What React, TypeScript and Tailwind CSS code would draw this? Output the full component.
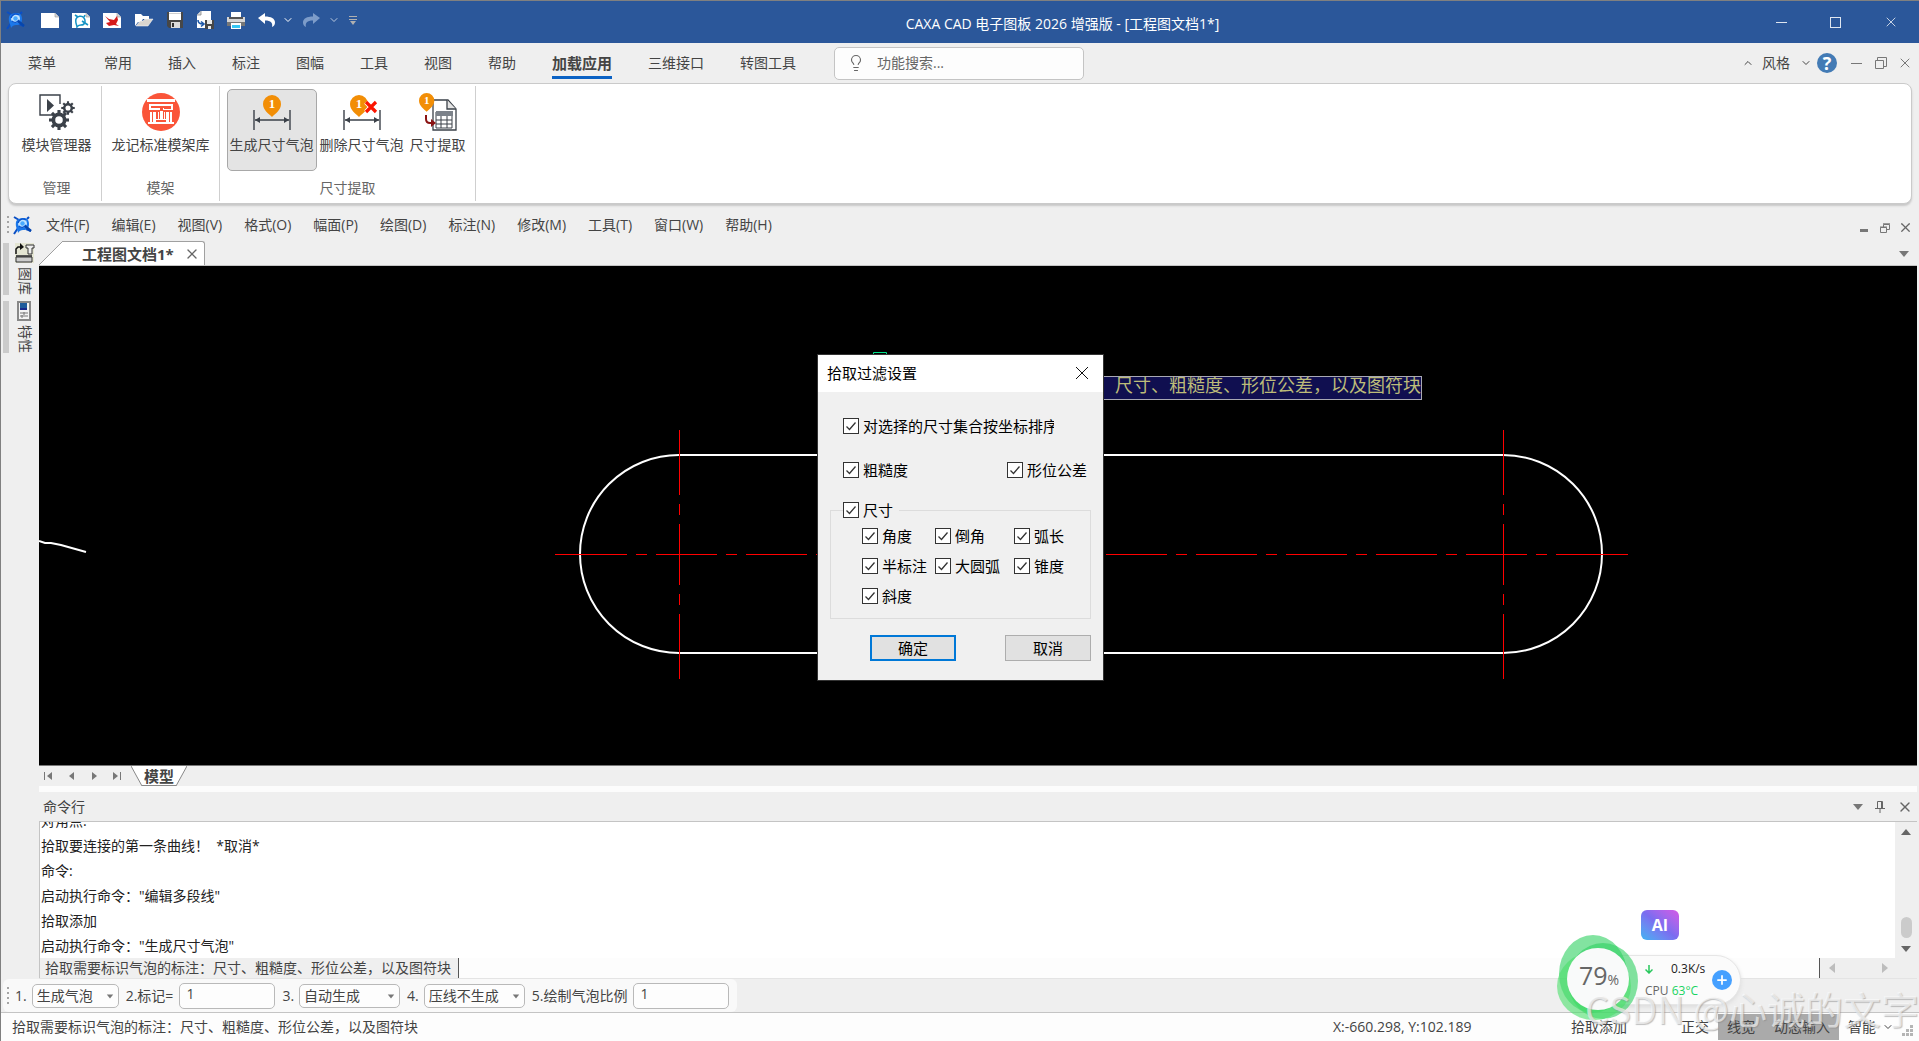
import type { ReactNode } from 'react'
import { ChevronDown, ChevronUp, Lightbulb, Plus, X } from 'lucide-react'

type Option = { key: string; label: string }

type CheckProps = {
  label: string
  clip?: boolean
}

const ribbonTabs = ['常用', '插入', '标注', '图幅', '工具', '视图', '帮助', '加载应用', '三维接口', '转图工具']

const menuItems = [
  '文件(F)',
  '编辑(E)',
  '视图(V)',
  '格式(O)',
  '幅面(P)',
  '绘图(D)',
  '标注(N)',
  '修改(M)',
  '工具(T)',
  '窗口(W)',
  '帮助(H)',
]

const logLines: Option[] = [
  { key: 'l1', label: '对角点:' },
  { key: 'l2', label: '拾取要连接的第一条曲线！  *取消*' },
  { key: 'l3', label: '命令:' },
  { key: 'l4', label: '启动执行命令："编辑多段线"' },
  { key: 'l5', label: '拾取添加' },
  { key: 'l6', label: '启动执行命令："生成尺寸气泡"' },
]

const prompt = '拾取需要标识气泡的标注：尺寸、粗糙度、形位公差，以及图符块'

function LogoMark() {
  return (
    <svg viewBox="0 0 20 20" className="size-5" fill="none">
      <path d="M2 2l5 3M2 19l4-6M15 4l2-2M14 14l5 2" stroke="#0b4fc4" strokeWidth="2" />
      <path d="M4 7c1-3 4-4 8-4 3 0 5 2 5 6s-2 6-6 6c-2 0-4 1-5 3 0-3-3-6-2-11z" fill="#1b78ea" />
      <circle cx="10.500" cy="8.500" r="4.500" fill="#bfe3ff" />
      <path d="M6 8c1-4 5-5 8-3M7 11c2 2 5 2 7-1" stroke="#0a56cf" strokeWidth="1.400" />
      <circle cx="10.500" cy="8.500" r="2.200" fill="#4aaaff" />
      <path d="M13 11l6 5" stroke="#0646ae" strokeWidth="2.400" />
    </svg>
  )
}

function PageIcon({ children }: { children?: ReactNode }) {
  return (
    <svg viewBox="0 0 18 15" className="h-[15px] w-[18px]">
      <path d="M0 0h14l4 4v11H0z" fill="#fff" />
      <path d="M14 0v4h4" fill="#d8d8d8" stroke="#999" strokeWidth=".6" />
      {children}
    </svg>
  )
}

function OpenIcon() {
  return (
    <svg viewBox="0 0 20 14" className="h-[14px] w-5">
      <path d="M1 13V1h6l2 2h6v3H9L7 9H4z" fill="#fff" />
      <path d="M2 13l4-5h3l2-2h8l-5 7z" fill="#d9d5cf" stroke="#fff" strokeWidth=".5" />
    </svg>
  )
}

function SaveIcon() {
  return (
    <svg viewBox="0 0 16 16" className="size-4">
      <path d="M0 0h16v16H2l-2-2z" fill="#474747" />
      <path d="M2 0h12v8H2z" fill="#fff" />
      <path d="M2 1h12v1H2z" fill="#cfcfcf" />
      <path d="M4 10h9v6H4z" fill="#ddd" />
      <path d="M5 11h2v4H5z" fill="#333" />
    </svg>
  )
}

function SaveAsIcon() {
  return (
    <svg viewBox="0 0 18 18" className="size-[18px]">
      <path d="M5 0h10v17H1V4z" fill="#fff" />
      <path d="M5 0v4H1" fill="#d8d8d8" stroke="#888" strokeWidth=".8" />
      <path d="M2 9c0 3 2 4 5 4M5 10.500l3 2.500-3 2.500" stroke="#1d58a8" strokeWidth="1.600" fill="none" />
      <path d="M9 9h9v9H9z" fill="#474747" />
      <path d="M11 9h5v4h-5zM12 15h3v3h-3z" fill="#e8e8e8" />
    </svg>
  )
}

function PrintIcon() {
  return (
    <svg viewBox="0 0 18 17" className="h-[17px] w-[18px]">
      <path d="M4 0h10v6H4z" fill="#fff" />
      <path d="M0 5h3v2h12V5h3v8H0z" fill="#d5d5d5" />
      <path d="M2 5h14v2H2z" fill="#555" />
      <path d="M0 10h18v4H0z" fill="#777" />
      <path d="M4 11h10v6H4z" fill="#fff" />
      <path d="M5 13h8v3H5z" fill="#35c6f4" />
    </svg>
  )
}

function UndoIcon({ flip = false }: { flip?: boolean }) {
  return (
    <svg viewBox="0 0 18 14" className={flip ? 'h-[14px] w-[18px] -scale-x-100 text-[#7d9cc9]' : 'h-[14px] w-[18px] text-white'}>
      <path d="M0 5l7-5v3.500c6 0 10 2 10 6 0 2-1 3.500-3 4.500 1-4-1-6.500-7-6.500V11z" fill="currentColor" />
    </svg>
  )
}

function Gear({ cx, cy, r }: { cx: number; cy: number; r: number }) {
  const tooth = r * 0.42
  return (
    <g transform={`translate(${cx} ${cy})`}>
      {[0, 45, 90, 135, 180, 225, 270, 315].map((a) => (
        <rect key={a} x={-tooth / 2} y={-r * 1.35} width={tooth} height={r * 0.6} fill="#3b4149" transform={`rotate(${a})`} />
      ))}
      <circle r={r * 0.76} fill="none" stroke="#3b4149" strokeWidth={r * 0.5} />
    </g>
  )
}

function ModuleIcon() {
  return (
    <svg viewBox="0 0 36 38" className="h-[38px] w-9">
      <path d="M14 22H1V2h20v9" fill="none" stroke="#3b4149" strokeWidth="1.400" />
      <path d="M8 6l7 6.500L8 19z" fill="#3b4149" />
      <Gear cx={29} cy={15} r={5} />
      <Gear cx={20} cy={27} r={7.4} />
    </svg>
  )
}

function MoldIcon() {
  return (
    <svg viewBox="0 0 38 38" className="size-[38px]">
      <circle cx="19" cy="19" r="19" fill="#fa5539" />
      <path d="M5 6h28v3H5zM7 11h24v2H7zM7 15h24v2H7zM7 11h2v6H7zM29 11h2v6h-2z" fill="#fff" />
      <path d="M18 15h3v2h-3zM22 14h7v2h-7z" fill="#fa5539" />
      <path d="M8 19h6v10H8zM24 19h6v10h-6zM16 19h1v8h-1zM18 18h3v9h-3zM22 19h1v8h-1zM13 26h12v1H13zM6 29h26v2H6z" fill="#fff" />
      <path d="M10 19h1v10h-1zM27 19h1v10h-1z" fill="#fa5539" />
    </svg>
  )
}

function Pin({ x, y }: { x: number; y: number }) {
  return (
    <g transform={`translate(${x} ${y})`}>
      <path d="M0 13C-3 10-9 6-9 0a9 9 0 0 1 18 0c0 6-6 10-9 13z" fill="#f28e06" />
      <text y="4" textAnchor="middle" fontSize="13" fontWeight="700" fill="#fff" className="font-['Liberation_Serif',serif]">
        1
      </text>
    </g>
  )
}

function BubbleIcon({ remove = false }: { remove?: boolean }) {
  return (
    <svg viewBox="0 0 38 38" className="size-[38px] overflow-visible">
      <path d="M1 17v20M37 17v20M2 27h34" stroke="#3b4149" strokeWidth="1.400" />
      <path d="M2 27l5-3v6zM36 27l-5-3v6z" fill="#3b4149" />
      <Pin x={remove ? 16 : 19} y={11} />
      {remove && <path d="M23 9l10 10M33 9L23 19" stroke="#fff" strokeWidth="5" />}
      {remove && <path d="M23 9l10 10M33 9L23 19" stroke="#fb1500" strokeWidth="3.200" />}
    </svg>
  )
}

function ExtractIcon() {
  return (
    <svg viewBox="0 0 38 38" className="size-[38px]">
      <path d="M14 37V7h15l8 9v21z" fill="#fff" stroke="#3b4149" strokeWidth="1.300" />
      <path d="M28 7v9h9" fill="#e4e4e4" stroke="#3b4149" strokeWidth="1.300" />
      <path d="M17 19h16v16H17z" fill="#fff" stroke="#3b4149" />
      <path d="M17 18h17v5H17z" fill="#7c828a" />
      <path d="M17 27h16M17 31h16M22 23v12M28 23v12" stroke="#3b4149" />
      <path d="M7 22v4c0 3 1 4 4 4h3" stroke="#8a1212" strokeWidth="2" fill="none" />
      <path d="M12 26l5 4-5 4z" fill="#8a1212" />
      <g transform="scale(.85)">
        <Pin x={9} y={9} />
      </g>
    </svg>
  )
}

function Triangle({ className, d }: { className?: string; d: string }) {
  return (
    <svg viewBox="0 0 10 10" className={className ?? 'size-[10px] text-[#777]'}>
      <path d={d} fill="currentColor" />
    </svg>
  )
}

function RestoreIcon() {
  return (
    <svg viewBox="0 0 12 12" className="size-3" fill="none" stroke="#777">
      <path d="M.5 3.500h8v8h-8zM2.500 3V.5h9v9H9" />
    </svg>
  )
}

function Dots() {
  return (
    <span className="flex flex-col gap-[3px]">
      {[0, 1, 2, 3].map((n) => (
        <i key={n} className="size-[2px] bg-[#a5a5a5]" />
      ))}
    </span>
  )
}

function RibbonGroup({ title, children, className }: { title: string; children: ReactNode; className: string }) {
  return (
    <section className={`my-[2px] flex flex-col border-r border-[#cfcfcf] ${className}`}>
      <div className="flex flex-1 items-start justify-center pt-[3px]">{children}</div>
      <h2 className="pb-[3px] text-center leading-5 text-[#666]">{title}</h2>
    </section>
  )
}

function RibbonButton({ label, icon, active = false }: { label: string; icon: ReactNode; active?: boolean }) {
  return (
    <button
      type="button"
      className={[
        'flex h-[82px] flex-col items-center gap-[4px] rounded-[5px] border px-[2px] pt-[3px] whitespace-nowrap leading-5',
        active ? 'border-[#a8a8a8] bg-[#e4e4e4]' : 'border-transparent',
      ].join(' ')}
    >
      {icon}
      {label}
    </button>
  )
}

function Check({ label, clip = false }: CheckProps) {
  return (
    <label className="flex items-center gap-1 text-[15px] leading-4 whitespace-nowrap text-black">
      <span className="grid size-4 shrink-0">
        <input type="checkbox" defaultChecked className="peer size-4 appearance-none border border-[#333] bg-white [grid-area:1/1]" />
        <svg viewBox="0 0 16 16" className="pointer-events-none invisible size-4 peer-checked:visible [grid-area:1/1]">
          <path d="M3.500 8.500l3 3 6-7" fill="none" stroke="#333" strokeWidth="1.300" />
        </svg>
      </span>
      <span className={clip ? 'w-[191px] overflow-hidden' : ''}>{label}</span>
    </label>
  )
}

function TitleBar() {
  return (
    <header className="flex h-[43px] items-center border-t border-[#808080] bg-[#2b579a] text-white">
      <div className="flex items-center pb-1 pl-1">
        <LogoMark />
        <div className="ml-4 flex items-center gap-[13px]">
          <button type="button" aria-label="新建"><PageIcon /></button>
          <button type="button" aria-label="新建图纸">
            <PageIcon>
              <path d="M4 6c1-3 6-4 8-1s1 7-3 7c-3 0-3 1-4 2 0-2-2-4-1-8z" fill="none" stroke="#1592c4" strokeWidth="1.500" />
              <path d="M3 2l3 2M13 2l-1 2M10 8l6 4" stroke="#1592c4" strokeWidth="1.600" />
            </PageIcon>
          </button>
          <button type="button" aria-label="打开图纸">
            <PageIcon>
              <path d="M2 3l4 3 5 1 3-4 1 4-2 4 3 2-5-1-5 1-3-3 4-1z" fill="#d51a1a" />
            </PageIcon>
          </button>
          <button type="button" aria-label="打开"><OpenIcon /></button>
          <button type="button" aria-label="保存"><SaveIcon /></button>
          <button type="button" aria-label="另存为"><SaveAsIcon /></button>
          <button type="button" aria-label="打印"><PrintIcon /></button>
          <button type="button" aria-label="撤销"><UndoIcon /></button>
        </div>
        <ChevronDown className="ml-[6px] size-3" />
        <button type="button" aria-label="重做" className="ml-2"><UndoIcon flip /></button>
        <ChevronDown className="ml-2 size-3 text-[#b9c8de]" />
        <svg viewBox="0 0 8 9" className="ml-[9px] h-[9px] w-2 text-[#b0b0b0]">
          <path d="M0 0h8v1H0zM0 3h8v1H0zM1 5h6L4 9z" fill="currentColor" />
        </svg>
      </div>
      <h1 className="flex-1 pt-1 pr-2 text-center whitespace-nowrap">CAXA CAD 电子图板 2026 增强版 - [工程图文档1*]</h1>
      <div className="flex items-center gap-[42px] pr-5">
        <button type="button" aria-label="最小化" className="flex h-3 w-3 items-center">
          <i className="block h-px w-[11px] bg-[#dfe6f0]" />
        </button>
        <button type="button" aria-label="最大化" className="size-[11px] border border-[#dfe6f0]" />
        <button type="button" aria-label="关闭"><X className="size-4 text-[#dfe6f0]" strokeWidth={1.3} /></button>
      </div>
    </header>
  )
}

function TabBar() {
  return (
    <nav className="flex h-10 items-center">
      <button type="button" className="ml-[27px]">菜单</button>
      <div className="ml-12 flex gap-9">
        {ribbonTabs.map((tab) => (
          <button
            key={tab}
            type="button"
            className={tab === '加载应用' ? 'border-y-3 border-t-transparent border-b-[#0b62c4] py-[3px] text-[15px] leading-5 font-bold' : 'leading-5'}
          >
            {tab}
          </button>
        ))}
      </div>
      <label className="ml-[38px] flex h-[33px] w-[250px] items-center gap-3 rounded-[5px] border border-[#c4c4c4] bg-[#fdfdfd] pl-[12px]">
        <Lightbulb className="size-[18px] text-[#666]" strokeWidth={1.5} />
        <input type="text" placeholder="功能搜索..." className="w-40 bg-transparent outline-none placeholder:text-[#666]" />
      </label>
      <div className="ml-auto flex items-center pr-[6px]">
        <ChevronUp className="size-3 text-[#444]" />
        <button type="button" className="ml-2 flex items-center gap-[10px]">
          风格
          <ChevronDown className="size-3" />
        </button>
        <button type="button" className="ml-[5px] grid size-5 place-items-center rounded-full bg-[#437bb5] text-[18px] leading-5 font-bold text-white">?</button>
        <i className="ml-[14px] h-px w-[11px] bg-[#777]" />
        <button type="button" aria-label="还原" className="ml-[13px]"><RestoreIcon /></button>
        <button type="button" aria-label="关闭" className="ml-[10px]"><X className="size-4 text-[#777]" strokeWidth={1.5} /></button>
      </div>
    </nav>
  )
}

function Ribbon() {
  return (
    <div className="mr-[5px] ml-[7px] flex h-[121px] rounded-lg border border-[#cacaca] bg-white shadow-[0_2px_2px_#c8c8c8]">
      <RibbonGroup title="管理" className="w-[93px] pl-[3px]">
        <RibbonButton label="模块管理器" icon={<ModuleIcon />} />
      </RibbonGroup>
      <RibbonGroup title="模架" className="w-[118px]">
        <RibbonButton label="龙记标准模架库" icon={<MoldIcon />} />
      </RibbonGroup>
      <RibbonGroup title="尺寸提取" className="w-64">
        <RibbonButton label="生成尺寸气泡" icon={<BubbleIcon />} active />
        <RibbonButton label="删除尺寸气泡" icon={<BubbleIcon remove />} />
        <RibbonButton label="尺寸提取" icon={<ExtractIcon />} />
      </RibbonGroup>
    </div>
  )
}

function MenuBar() {
  return (
    <div className="flex h-[37px] items-center pt-1 pl-[6px]">
      <Dots />
      <span className="ml-[3px]"><LogoMark /></span>
      <nav className="ml-[14px] flex gap-[22px]">
        {menuItems.map((item) => (
          <button key={item} type="button">{item}</button>
        ))}
      </nav>
      <div className="ml-auto flex items-center gap-3 pt-[6px] pr-2">
        <i className="mt-[5px] h-[3px] w-2 bg-[#777]" />
        <svg viewBox="0 0 10 10" className="size-[10px]" fill="none" stroke="#777">
          <path d="M.5 4.500h6v5h-6zM3.500 4V1.500h6v5H7M3 .8h7M0 4h7" />
        </svg>
        <X className="-mx-1 size-[15px] text-[#666]" strokeWidth={2} />
      </div>
    </div>
  )
}

function SideBar() {
  return (
    <aside className="flex w-[38px] shrink-0 flex-col gap-[6px] pt-[2px] pl-[2px]">
      <button type="button" className="flex h-[52px] border-l-6 border-[#cbcbcb] pl-[6px]">
        <span className="flex w-5 flex-col items-center gap-1">
          <svg viewBox="0 0 20 20" className="size-5">
            <path d="M0 0h19v20H0z" fill="#e4e5d3" />
            <path d="M1 11V6l2-2h4" stroke="#111" strokeWidth="1.500" fill="none" />
            <path d="M5 0l4 4-4 3z" fill="#111" />
            <path d="M11 2h8v3h-2v6h-4V5h-2z" fill="#eee" stroke="#333" />
            <path d="M1 12h16v3H1z" fill="#555" />
            <path d="M1 14h16v5H1z" fill="#ccc" stroke="#333" />
          </svg>
          <span className="leading-4 [text-orientation:sideways] [writing-mode:vertical-rl]">图库</span>
        </span>
      </button>
      <button type="button" className="flex h-[52px] border-l-6 border-[#cbcbcb] pl-[6px]">
        <span className="flex w-5 flex-col items-center gap-1">
          <svg viewBox="0 0 20 20" className="size-5">
            <path d="M3 1h12v18H3z" fill="#f4f4f4" stroke="#888" strokeWidth="2" />
            <path d="M5 2h7v7H5z" fill="#1e5b9b" />
            <path d="M5 7h7v2H5z" fill="#1a2a8c" />
            <path d="M5 12h8M5 15h8M9 11v3M7 14v3" stroke="#777" />
          </svg>
          <span className="leading-4 [text-orientation:sideways] [writing-mode:vertical-rl]">特性</span>
        </span>
      </button>
    </aside>
  )
}

function DocumentTabs() {
  return (
    <div className="flex h-[25px] items-end border-b border-[#c4c4c4]">
      <svg viewBox="0 0 24 24" className="h-6 w-6">
        <path d="M0 24L24 0v24z" fill="#fff" />
        <path d="M0 24L24 0" stroke="#a0a0a0" />
      </svg>
      <div className="flex h-6 items-center gap-[10px] rounded-tr-[3px] border-t border-r border-[#a0a0a0] bg-white pr-1 pl-[19px]">
        <span className="text-[15px] leading-5 font-bold">工程图文档1*</span>
        <button type="button" aria-label="关闭文档"><X className="size-4 text-[#666]" /></button>
      </div>
      <Triangle className="mr-[8px] mb-[6px] ml-auto h-[10px] w-[10px] text-[#777]" d="M0 2h10L5 8z" />
    </div>
  )
}

function Drawing() {
  return (
    <div className="relative flex-1 overflow-hidden bg-black">
      <svg className="absolute inset-0 h-full w-full" fill="none">
        <path d="M640 189H1464A99 99 0 0 1 1464 387H640A99 99 0 0 1 640 189Z" stroke="#fff" strokeWidth="2" />
        <path d="M0 275l6 2 6 0 10 2 25 7" stroke="#fff" strokeWidth="2" />
        <g stroke="#f00">
          <path d="M516 288.500h11M1578 288.500h11" />
          <path d="M527 288.500H1578" strokeDasharray="61 9 11 9" />
          <path d="M640.500 164v65m0 9v11m0 9v61m0 9v11m0 9v65" />
          <path d="M1464.500 164v65m0 9v11m0 9v61m0 9v11m0 9v65" />
        </g>
        <path d="M834.500 95V86.500h13V95" stroke="#00e08a" />
      </svg>
      <p className="absolute top-[110px] left-[1064px] border border-l-0 border-[#a9a9b4] bg-[#100f50] pb-[6px] pl-3 text-[18px] leading-4 whitespace-nowrap text-[#bdbc79]">
        尺寸、粗糙度、形位公差，以及图符块
      </p>
    </div>
  )
}

function SheetTabs() {
  return (
    <div className="flex h-[27px] items-start border-t border-b-6 border-t-[#777] border-b-[#fcfcfc]">
      <div className="flex gap-[13px] pt-[5px] pl-1 text-[#777]">
        <Triangle d="M1 1h1v8H1zM9 1v8L4 5z" />
        <Triangle d="M8 1v8L3 5z" />
        <Triangle d="M3 1v8l5-4z" />
        <Triangle d="M8 1h1v8H8zM1 1v8l5-4z" />
      </div>
      <div className="ml-[9px] flex">
        <svg viewBox="0 0 11 20" className="h-5 w-[11px]">
          <path d="M0 0h11v20z" fill="#fff" />
          <path d="M0 0l11 20" stroke="#888" />
        </svg>
        <button type="button" className="h-5 border-b border-[#888] bg-white px-[2px] text-[15px] leading-[18px] font-bold">模型</button>
        <svg viewBox="0 0 11 20" className="h-5 w-[11px]">
          <path d="M0 0h11L0 20z" fill="#fff" />
          <path d="M11 0L0 20" stroke="#888" />
        </svg>
      </div>
    </div>
  )
}

function CommandPanel() {
  return (
    <section className="border-b border-[#e4e4e4]">
      <div className="flex h-[30px] items-center border-b border-[#c4c4c4] pr-1 pl-1">
        <h2>命令行</h2>
        <div className="ml-auto flex items-center gap-3">
          <Triangle d="M0 2h10L5 8z" />
          <svg viewBox="0 0 10 12" className="h-3 w-[10px]" fill="none" stroke="#666">
            <path d="M2.500 7V.5h5V7M6.500 1v6M0 7.500h10M5 8v4" />
          </svg>
          <X className="size-4 text-[#666]" />
        </div>
      </div>
      <div className="flex h-[136px] border-l border-[#c4c4c4]">
        <ol className="flex flex-1 flex-col justify-end overflow-hidden bg-white pl-px text-[#222]">
          {logLines.map((line) => (
            <li key={line.key} className="shrink-0 leading-[25px] whitespace-pre">{line.label}</li>
          ))}
        </ol>
        <div className="flex w-[22px] flex-col items-center pt-[5px] pb-1">
          <Triangle d="M0 8h10L5 2z" className="size-[10px] text-[#666]" />
          <i className="mt-auto mb-[6px] h-[21px] w-[11px] rounded-full bg-[#cbcbcb]" />
          <Triangle d="M0 2h10L5 8z" className="size-[10px] text-[#666]" />
        </div>
      </div>
      <div className="flex h-5 items-center border-l border-[#c4c4c4] pl-[5px]">
        <label htmlFor="command">{prompt}</label>
        <input id="command" type="text" className="ml-[7px] h-full flex-1 border-x border-[#555] bg-[#fdfdfd] outline-none" />
        <div className="flex w-[97px] gap-[43px] pl-[7px]">
          <Triangle d="M8 0v10L2 5z" className="size-[10px] text-[#bdbdbd]" />
          <Triangle d="M2 0v10l6-5z" className="size-[10px] text-[#bdbdbd]" />
        </div>
      </div>
    </section>
  )
}

function OptionSelect({ id, num, value, className }: { id: string; num: string; value: string; className: string }) {
  return (
    <div className="flex items-center gap-[5px]">
      <label htmlFor={id}>{num}</label>
      <span className={`grid items-center ${className}`}>
        <select id={id} defaultValue={value} className="h-6 appearance-none rounded-[5px] border border-[#b9b9b9] bg-[#fdfdfd] pl-1 leading-5 [grid-area:1/1]">
          <option>{value}</option>
        </select>
        <Triangle d="M1 3h8L5 8z" className="pointer-events-none mr-[5px] size-[8px] justify-self-end text-[#777] [grid-area:1/1]" />
      </span>
    </div>
  )
}

function OptionInput({ id, label }: { id: string; label: string }) {
  return (
    <div className="flex items-center gap-[6px]">
      <label htmlFor={id}>{label}</label>
      <input id={id} type="text" defaultValue="1" className="h-[26px] w-24 rounded-[5px] border border-[#b9b9b9] bg-[#fdfdfd] px-[6px] pb-1 leading-5" />
    </div>
  )
}

function OptionBar() {
  return (
    <div className="flex h-[33px] pl-[2px]">
      <form className="flex items-center gap-[7px] rounded-md bg-[#f9f9f9] pr-2 pl-1">
        <div className="flex items-center gap-[6px]">
          <Dots />
          <OptionSelect id="mode" num="1." value="生成气泡" className="w-[87px]" />
        </div>
        <OptionInput id="mark" label="2.标记=" />
        <OptionSelect id="auto" num="3." value="自动生成" className="w-[101px]" />
        <OptionSelect id="line" num="4." value="压线不生成" className="w-[101px]" />
        <OptionInput id="ratio" label="5.绘制气泡比例" />
      </form>
    </div>
  )
}

function StatusBar() {
  return (
    <footer className="flex h-[29px] items-stretch border-t border-[#c4c4c4] bg-[#fdfdfd] pl-[11px] leading-7">
      <span>{prompt}</span>
      <span className="ml-auto w-[238px]">X:-660.298, Y:102.189</span>
      <span className="w-[110px]">拾取添加</span>
      <button type="button">正交</button>
      <div className="mt-px mb-px ml-[9px] flex gap-[19px] bg-[#aaa] px-[9px] leading-[26px]">
        <button type="button">线宽</button>
        <button type="button">动态输入</button>
      </div>
      <button type="button" className="ml-[9px] flex items-center gap-[6px]">
        智能
        <ChevronDown className="size-3" />
      </button>
      <svg viewBox="0 0 12 12" className="mt-3 mr-[5px] ml-2 size-3" fill="#b5b5b5">
        <path d="M8 0h3v3H8zM4 4h3v3H4zM8 4h3v3H8zM0 8h3v3H0zM4 8h3v3H4zM8 8h3v3H8z" />
      </svg>
    </footer>
  )
}

function FilterDialog() {
  return (
    <div role="dialog" aria-label="拾取过滤设置" className="absolute top-[355px] left-[817px] w-[285px] bg-[#f0f0f0] text-black shadow-[0_0_0_1px_#333]">
      <div className="flex h-[37px] items-center justify-between bg-white pr-[14px] pb-[2px] pl-[9px]">
        <h2 className="text-[15px]">拾取过滤设置</h2>
        <button type="button" aria-label="关闭">
          <svg viewBox="0 0 14 14" className="size-[14px]"><path d="M1 1l12 12M13 1L1 13" stroke="#111" /></svg>
        </button>
      </div>
      <div className="flex flex-col px-3 pt-[26px] pb-[19px]">
        <div className="pl-[13px]"><Check label="对选择的尺寸集合按坐标排序" clip /></div>
        <div className="mt-7 flex justify-between pr-1 pl-[13px]">
          <Check label="粗糙度" />
          <Check label="形位公差" />
        </div>
        <fieldset className="mt-6 border border-[#dcdcdc] px-3 pb-[14px]">
          <legend className="pr-[6px]"><Check label="尺寸" /></legend>
          <div className="grid grid-cols-[73px_79px_1fr] gap-y-[14px] pt-[10px] pl-[19px]">
            {['角度', '倒角', '弧长', '半标注', '大圆弧', '锥度', '斜度'].map((item) => (
              <Check key={item} label={item} />
            ))}
          </div>
        </fieldset>
        <div className="mt-4 flex justify-between pl-10 text-[15px]">
          <button type="button" className="h-[26px] w-[86px] border-2 border-[#0078d7] bg-[#e1e1e1] leading-5">确定</button>
          <button type="button" className="h-[26px] w-[86px] border border-[#adadad] bg-[#e1e1e1] leading-5">取消</button>
        </div>
      </div>
    </div>
  )
}

function MonitorWidget() {
  return (
    <div className="absolute right-[179px] bottom-9 w-[170px]">
      <button type="button" className="ml-[71px] grid h-[30px] w-[38px] place-items-center rounded-md bg-linear-to-tr from-[#35b3f2] via-[#7a6cf0] to-[#d458e6] text-[16px] font-bold text-white">
        AI
      </button>
      <div className="mt-[15px] flex h-[50px] w-[171px] items-center rounded-full border border-[#e6e6e6] bg-[#fbfbfb] pr-2 pl-[74px] text-[12px] leading-[22px] shadow-[0_2px_4px_#ddd]">
        <div className="w-[68px]">
          <p className="flex items-center text-[#222]">
            <svg viewBox="0 0 8 9" className="mr-[18px] h-[9px] w-2" fill="none" stroke="#27c75c" strokeWidth="1.500"><path d="M4 0v8M.5 4.500L4 8l3.500-3.500" /></svg>
            0.3K/s
          </p>
          <p className="whitespace-nowrap text-[#666]">CPU <span className="text-[#19d35f]">63°C</span></p>
        </div>
        <button type="button" aria-label="添加" className="grid size-5 shrink-0 place-items-center rounded-full bg-[#45a0ff] text-white">
          <Plus className="size-[14px]" strokeWidth={3} />
        </button>
      </div>
      <div className="absolute top-[24px] -left-[14px] grid size-[86px] place-items-center">
        <svg viewBox="0 0 86 86" className="size-[86px] [grid-area:1/1]">
          <ellipse cx="37" cy="40" rx="34" ry="39" fill="#2fd060" opacity=".6" />
          <ellipse cx="47" cy="47" rx="35" ry="38" fill="#2fd060" opacity=".6" />
          <ellipse cx="38" cy="52" rx="37" ry="34" fill="#4be06a" opacity=".6" />
          <circle cx="42" cy="45" r="31" fill="#f9fafa" />
        </svg>
        <p className="text-[25px] leading-6 text-[#666] [grid-area:1/1]">79<small className="text-[14px]">%</small></p>
      </div>
    </div>
  )
}

export default function App() {
  return (
    <div className="relative flex h-screen flex-col overflow-hidden border-l border-[#808080] bg-[#efefef] font-['Open_Sans','Noto_Sans_CJK_SC',sans-serif] text-[14px] leading-5 text-[#444]">
      <TitleBar />
      <TabBar />
      <div className="pr-[2px]">
        <Ribbon />
        <MenuBar />
      </div>
      <div className="flex min-h-0 flex-1 pr-[2px]">
        <SideBar />
        <main className="flex min-w-0 flex-1 flex-col">
          <DocumentTabs />
          <Drawing />
          <SheetTabs />
          <CommandPanel />
        </main>
      </div>
      <OptionBar />
      <StatusBar />
      <FilterDialog />
      <MonitorWidget />
      <p className="pointer-events-none absolute right-0 bottom-1 font-['Noto_Sans_CJK_SC',sans-serif] text-[38px] leading-[58px] whitespace-nowrap text-white/60 [text-shadow:1px_1px_1px_#8888]">
        CSDN @心诚的文字
      </p>
    </div>
  )
}
